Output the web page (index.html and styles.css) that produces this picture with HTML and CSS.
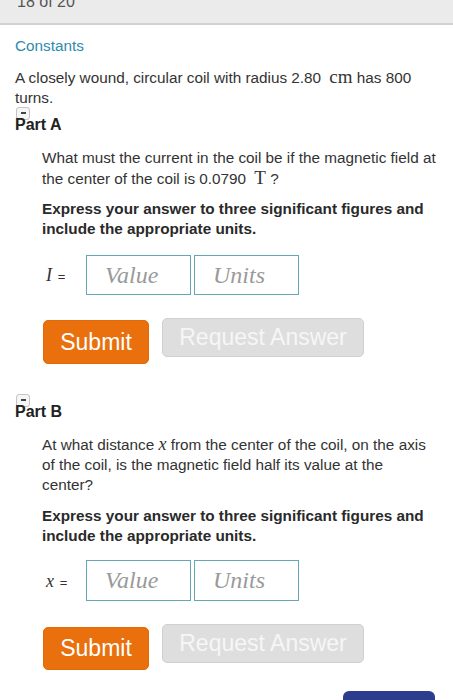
FILE: index.html
```html
<!DOCTYPE html>
<html>
<head>
<meta charset="utf-8">
<link rel="stylesheet" href="styles.css">
</head>
<body>
<div class="topbar"><span class="counter">18 of 20</span></div>
<main class="content">
  <a class="constants">Constants</a>
  <p class="intro">A closely wound, circular coil with radius 2.80 <span class="unit">cm</span> has 800 turns.</p>

  <section class="part part-a">
    <div class="part-head"><span class="toggle"><span class="dash"></span></span><h2 class="part-title">Part A</h2></div>
    <div class="part-body">
      <p class="question">What must the current in the coil be if the magnetic field at the center of the coil is 0.0790 <span class="unit">T</span> ?</p>
      <p class="instr">Express your answer to three significant figures and include the appropriate units.</p>
      <div class="answer-row">
        <span class="label"><span class="var">I</span> <span class="eq">=</span></span>
        <div class="field">Value</div>
        <div class="field">Units</div>
      </div>
      <div class="btn-row">
        <button class="submit">Submit</button>
        <button class="request">Request Answer</button>
      </div>
    </div>
  </section>

  <section class="part part-b">
    <div class="part-head"><span class="toggle"><span class="dash"></span></span><h2 class="part-title">Part B</h2></div>
    <div class="part-body">
      <p class="question question-b">At what distance <span class="mvar">x</span> from the center of the coil, on the axis of the coil, is the magnetic field half its value at the center?</p>
      <p class="instr instr-b">Express your answer to three significant figures and include the appropriate units.</p>
      <div class="answer-row answer-row-b">
        <span class="label"><span class="mvar">x</span> <span class="eq">=</span></span>
        <div class="field">Value</div>
        <div class="field">Units</div>
      </div>
      <div class="btn-row">
        <button class="submit">Submit</button>
        <button class="request">Request Answer</button>
      </div>
    </div>
  </section>

  <div class="footer"><button class="next"></button></div>
</main>
</body>
</html>
```

FILE: styles.css
```css
html, body {
  margin: 0;
  padding: 0;
  background: #ffffff;
}
body {
  font-family: "Liberation Sans", Arial, sans-serif;
  color: #333333;
  width: 453px;
  height: 700px;
  overflow: hidden;
}
.topbar {
  height: 23px;
  background: #ebebeb;
  border-bottom: 2px solid #d2d2d2;
  overflow: hidden;
  padding-left: 17px;
}
.counter {
  display: block;
  font-size: 16px;
  line-height: 16px;
  margin-top: -6px;
  color: #555555;
}
.content {
  padding: 0 12px 0 15px;
}
.constants {
  display: block;
  margin-top: 11px;
  font-size: 15.3px;
  line-height: 20px;
  color: #2f8aab;
}
.intro {
  margin: 11px 0 0 0;
  font-size: 15.3px;
  line-height: 20px;
}
.unit {
  font-family: "Liberation Serif", "Times New Roman", serif;
  font-size: 19px;
  line-height: 1;
  margin-left: 4px;
}
.part-a {
  margin-top: 7px;
}
.part-b {
  margin-top: 37.5px;
}
.part-head {
  position: relative;
}
.toggle {
  position: absolute;
  left: 1px;
  top: -8px;
  width: 14px;
  height: 13px;
  border: 1px solid #c4c4c4;
  border-radius: 3px;
  background: #f6f6f6;
  box-sizing: border-box;
}
.dash {
  position: absolute;
  left: 4px;
  top: 4px;
  width: 5px;
  height: 2px;
  background: #444444;
}
.part-title {
  position: relative;
  margin: 0;
  font-size: 16px;
  line-height: 20px;
  font-weight: bold;
  color: #222222;
}
.part-body {
  padding-left: 27px;
}
.question {
  margin: 13px 0 0 0;
  font-size: 15.3px;
  line-height: 20px;
}
.question-b {
  max-width: 390px;
}
.mvar {
  font-family: "Liberation Serif", "Times New Roman", serif;
  font-style: italic;
  font-size: 18px;
  line-height: 1;
}
.instr {
  margin: 10px 0 0 0;
  font-size: 15.3px;
  line-height: 20px;
  font-weight: bold;
  color: #2a2a2a;
}
.instr-b {
  margin-top: 11px;
}
.answer-row {
  display: flex;
  align-items: center;
  margin-top: 16px;
  gap: 3px;
}
.answer-row-b {
  margin-top: 14.5px;
}
.label {
  width: 37px;
  padding-left: 4px;
  font-size: 13px;
  color: #333333;
  white-space: nowrap;
}
.var {
  font-family: "Liberation Serif", "Times New Roman", serif;
  font-style: italic;
  font-size: 18px;
}
.label .mvar {
  font-size: 18px;
}
.eq {
  margin-left: 2px;
}
.field {
  box-sizing: border-box;
  width: 105px;
  height: 40px;
  border: 1px solid #64a7b9;
  padding-left: 18px;
  font-family: "Liberation Serif", "Times New Roman", serif;
  font-style: italic;
  font-size: 24px;
  line-height: 38px;
  color: #9a9a9a;
}
.answer-row-b .field {
  height: 41px;
  line-height: 39px;
}
.btn-row {
  display: flex;
  align-items: flex-start;
  gap: 13px;
  margin-top: 23px;
  margin-left: 1px;
}
.btn-row button {
  font-family: "Liberation Sans", Arial, sans-serif;
  font-size: 23px;
  padding: 0;
  box-sizing: border-box;
  text-align: center;
}
.submit {
  margin-top: 2px;
  width: 106px;
  height: 44px;
  background: #e9700d;
  border: 1px solid #e36a08;
  border-radius: 5px;
  color: #ffffff;
}
.part-b .submit {
  margin-top: 3px;
  height: 43px;
}
.request {
  width: 202px;
  height: 39px;
  background: #dedede;
  border: 1px solid #d0d0d0;
  border-radius: 5px;
  color: #f6f6f6;
}
.footer {
  display: flex;
  justify-content: flex-end;
  margin-top: 21px;
  padding-right: 6px;
}
.next {
  width: 92px;
  height: 30px;
  background: #2d3d8e;
  border: none;
  border-radius: 6px;
}
```
